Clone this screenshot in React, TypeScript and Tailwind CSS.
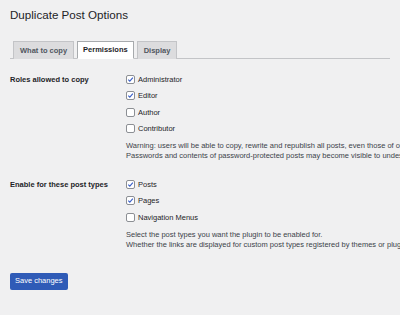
import { useState } from 'react'

type Option = { label: string; checked: boolean }

const roles: Option[] = [
  { label: 'Administrator', checked: true },
  { label: 'Editor', checked: true },
  { label: 'Author', checked: false },
  { label: 'Contributor', checked: false },
]

const postTypes: Option[] = [
  { label: 'Posts', checked: true },
  { label: 'Pages', checked: true },
  { label: 'Navigation Menus', checked: false },
]

function Checkbox({ label, checked }: Option) {
  const [on, setOn] = useState(checked)
  return (
    <label className="flex items-center gap-[3px] h-[16.5px] cursor-pointer" onClick={() => setOn(!on)}>
      <span className="w-[9px] h-[9px] rounded-[2px] border border-[#8c8f94] bg-white flex items-center justify-center">
        {on && (
          <svg viewBox="0 0 10 10" className="w-[7px] h-[7px]">
            <path d="M1.8 5.2 L4 7.4 L8.4 2.2" fill="none" stroke="#3a5fc8" strokeWidth="1.6" />
          </svg>
        )}
      </span>
      <span>{label}</span>
    </label>
  )
}

function Row({ title, options, notes }: { title: string; options: Option[]; notes: string[] }) {
  return (
    <div className="flex">
      <div className="w-[116px] shrink-0 font-bold text-[#1d2327] h-[16.5px] flex items-center">{title}</div>
      <div className="flex flex-col">
        {options.map((o) => (
          <Checkbox key={o.label} {...o} />
        ))}
        <div className="mt-[4px] leading-[10px] whitespace-nowrap text-[#3c434a]">
          {notes.map((n) => (
            <p key={n}>{n}</p>
          ))}
        </div>
      </div>
    </div>
  )
}

export default function App() {
  const tabs = ['What to copy', 'Permissions', 'Display']
  return (
    <div
      className="w-[400px] h-[315px] overflow-hidden bg-[#f0f0f1] text-[#1d2327] text-[7.5px] px-[10px]"
      style={{ fontFamily: '"Liberation Sans", Arial, sans-serif' }}
    >
      <h1 className="text-[11.6px] leading-[14px] pt-[8px] text-[#1d2327]">Duplicate Post Options</h1>

      <div className="mt-[19px] flex gap-[3px] pl-[3px] border-b border-[#c3c4c7] h-[18px]">
        {tabs.map((t) => {
          const active = t === 'Permissions'
          return (
            <div
              key={t}
              className={
                active
                  ? 'h-[18px] px-[5px] flex items-center font-bold bg-white border border-[#a7aaad] border-b-white -mb-px'
                  : 'h-[18px] px-[6px] flex items-center font-bold bg-[#dcdcde] text-[#50575e] border border-[#c3c4c7] border-b-0'
              }
            >
              {t}
            </div>
          )
        })}
      </div>

      <div className="mt-[12px] flex flex-col gap-[15px]">
        <Row
          title="Roles allowed to copy"
          options={roles}
          notes={[
            'Warning: users will be able to copy, rewrite and republish all posts, even those of other users.',
            'Passwords and contents of password-protected posts may become visible to undesired users and visitors.',
          ]}
        />
        <Row
          title="Enable for these post types"
          options={postTypes}
          notes={[
            'Select the post types you want the plugin to be enabled for.',
            'Whether the links are displayed for custom post types registered by themes or plugins depends on their use of standard WordPress UI elements.',
          ]}
        />
      </div>

      <button className="mt-[23px] h-[17px] px-[5px] rounded-[2px] bg-[#2f5bb7] text-white text-[7.5px] flex items-center">
        Save changes
      </button>
    </div>
  )
}
